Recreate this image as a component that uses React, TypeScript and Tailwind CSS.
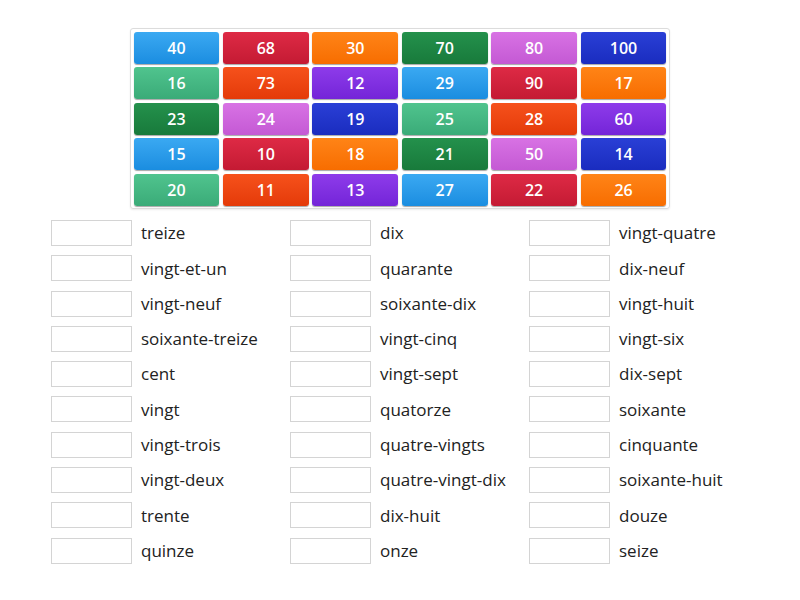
const tileColors = [
  'from-[#3aa9f2] to-[#1a8de0]',
  'from-[#de2a45] to-[#c41a33]',
  'from-[#ff8416] to-[#f76d00]',
  'from-[#24914c] to-[#187a3b]',
  'from-[#d872e4] to-[#c459d4]',
  'from-[#2a3fd6] to-[#1a2cbf]',
  'from-[#50c48e] to-[#3aab78]',
  'from-[#f6511b] to-[#e43a08]',
  'from-[#8e3bea] to-[#7424d8]',
] as const;

const numbers = [
  40, 68, 30, 70, 80, 100,
  16, 73, 12, 29, 90, 17,
  23, 24, 19, 25, 28, 60,
  15, 10, 18, 21, 50, 14,
  20, 11, 13, 27, 22, 26,
];

const columns = [
  ['treize', 'vingt-et-un', 'vingt-neuf', 'soixante-treize', 'cent', 'vingt', 'vingt-trois', 'vingt-deux', 'trente', 'quinze'],
  ['dix', 'quarante', 'soixante-dix', 'vingt-cinq', 'vingt-sept', 'quatorze', 'quatre-vingts', 'quatre-vingt-dix', 'dix-huit', 'onze'],
  ['vingt-quatre', 'dix-neuf', 'vingt-huit', 'vingt-six', 'dix-sept', 'soixante', 'cinquante', 'soixante-huit', 'douze', 'seize'],
];

function Tile({ value, index }: { value: number; index: number }) {
  return (
    <div
      className={`flex h-[32px] items-center justify-center rounded-[3px] bg-linear-to-b ${tileColors[index % 9]} text-[16px] font-semibold text-white shadow-[0_1px_1px_rgba(0,0,0,0.35)]`}
    >
      {value}
    </div>
  );
}

function Slot({ label }: { label: string }) {
  return (
    <div className="flex h-[26px] items-center">
      <div className="h-[26px] w-[81px] shrink-0 border border-[#d4d4d4] bg-white" />
      <span className="ml-[9px] whitespace-nowrap text-[17px] text-[#222]">{label}</span>
    </div>
  );
}

export default function App() {
  const rows = Array.from({ length: 10 }, (_, r) => columns.map((col) => col[r]));

  return (
    <div className="h-[600px] w-[800px] bg-white pt-[28px]" style={{ fontFamily: '"Open Sans", sans-serif' }}>
      <div className="mx-auto grid w-[540px] grid-cols-6 gap-x-[3.5px] gap-y-[3.5px] rounded-[3px] border border-[#dcdcdc] p-[2.5px] shadow-[0_1px_2px_rgba(0,0,0,0.08)]">
        {numbers.map((n, i) => (
          <Tile key={i} value={n} index={i} />
        ))}
      </div>

      <div className="ml-[51px] mt-[11px] grid grid-cols-[239px_239px_220px] gap-y-[9.3px]">
        {rows.flatMap((row, r) =>
          row.map((label, c) => <Slot key={`${r}-${c}`} label={label} />),
        )}
      </div>
    </div>
  );
}
